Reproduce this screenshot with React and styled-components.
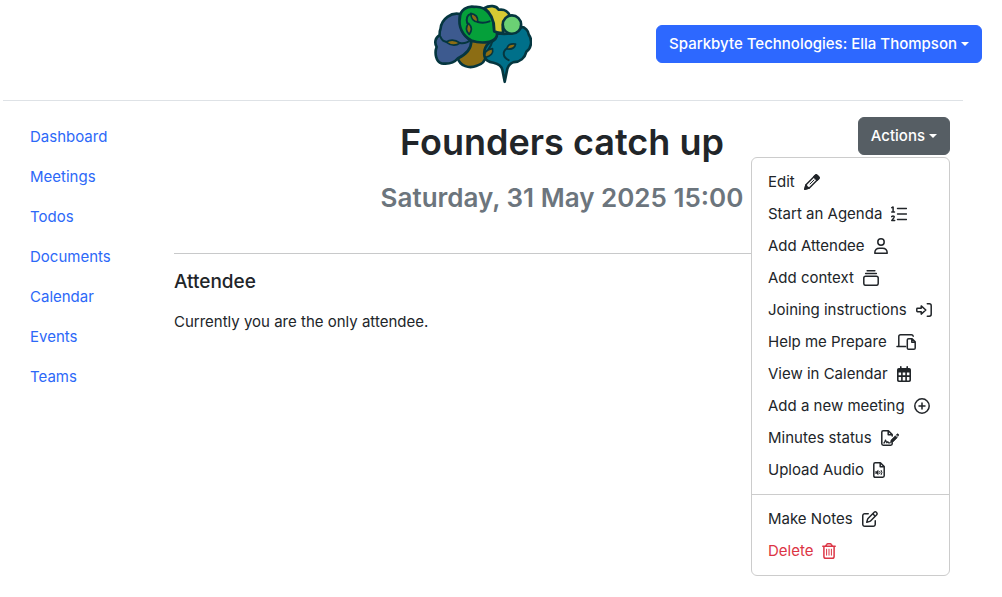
import React from "react";
import styled, { createGlobalStyle } from "styled-components";
import { FaRegPenToSquare } from "react-icons/fa6";

const GlobalStyle = createGlobalStyle`
  *, *::before, *::after { box-sizing: border-box; }
  body {
    margin: 0;
    min-height: 100vh;
    background: #fff;
    color: #212529;
    font: 400 15px/24px Inter, "Liberation Sans", sans-serif;
  }
`;

const Shell = styled.div`
  display: flex;
  flex-direction: column;
  min-height: 100vh;
`;

const Header = styled.header`
  display: grid;
  grid-template-columns: 1fr auto 1fr;
  align-items: start;
  min-height: 101px;
  margin: 0 39px 0 3px;
  border-bottom: 1px solid #dee2e6;
`;

const HomeLink = styled.a`
  grid-column: 2;
  padding-top: 4px;
  line-height: 0;
`;

const Button = styled.button`
  display: inline-flex;
  align-items: center;
  gap: 4px;
  padding: 6px 12px;
  border: 1px solid ${(p) => p.$color};
  border-radius: 6px;
  background: ${(p) => p.$color};
  color: #fff;
  font: inherit;
  font-weight: 500;
  white-space: nowrap;
  cursor: pointer;

  &::after {
    content: "";
    border-top: 4px solid;
    border-left: 4px solid transparent;
    border-right: 4px solid transparent;
  }
`;

const AccountSlot = styled.div`
  justify-self: end;
  margin: 25px -19px 0 0;
`;

const Page = styled.div`
  display: grid;
  flex: 1;
  grid-template-columns: 160px minmax(0, 1fr);
  padding: 16px 52px 16px 14px;
`;

const Nav = styled.nav`
  display: flex;
  flex-direction: column;
`;

const NavLink = styled.a`
  padding: 8px 16px;
  color: #2c68f8;
  text-decoration: none;
`;

const TitleRow = styled.div`
  display: grid;
  grid-template-columns: 1fr auto 1fr;
  align-items: start;
  min-height: 136px;
`;

const Titles = styled.div`
  grid-column: 2;
  text-align: center;
`;

const Title = styled.h1`
  margin: 0 0 16px;
  font-size: 36px;
  font-weight: 600;
  line-height: 50px;
`;

const Subtitle = styled.h2`
  margin: 0;
  color: #6c757d;
  font-size: 26px;
  font-weight: 600;
  line-height: 30px;
`;

const Dropdown = styled.div`
  position: relative;
  justify-self: end;
`;

const Menu = styled.div`
  position: absolute;
  top: 40px;
  right: 0;
  z-index: 1;
  display: flex;
  flex-direction: column;
  width: 199px;
  padding: 8px 0;
  border: 1px solid #ccc;
  border-radius: 6px;
  background: #fff;
`;

const MenuItem = styled.a`
  display: flex;
  align-items: center;
  gap: 9px;
  padding: 4px 16px;
  color: ${(p) => (p.$danger ? "#dc3545" : "#212529")};
  text-decoration: none;
  white-space: nowrap;
`;

const MenuDivider = styled.hr`
  width: 100%;
  margin: 8px 0;
  border: 0;
  border-top: 1px solid #ccc;
`;

const Rule = styled.hr`
  margin: 0 0 16px;
  border: 0;
  border-top: 1px solid #c8c9ca;
`;

const SectionTitle = styled.h3`
  margin: 0 0 16px;
  font-size: 19px;
  font-weight: 500;
  line-height: 24px;
`;

const Text = styled.p`
  margin: 0;
`;

const Glyph = styled.svg.attrs({ height: 16, fill: "none", stroke: "currentColor", strokeWidth: 1.5, strokeLinecap: "round", strokeLinejoin: "round", "aria-hidden": true })`
  flex: none;
`;

const Icon = ({ w = 16, children }) => (
  <Glyph width={w} viewBox={`0 0 ${w} 16`}>{children}</Glyph>
);

const icons = {
  pencil: (
    <Icon>
      <path d="M.8 15.2 2 10.7 11.2 1.5q1-1 2 0l1.3 1.3q1 1 0 2L5.3 14Z" />
      <path d="m9.8 2.9 3.3 3.3 1.6-1.6q.8-.8 0-1.6L13 1.3q-.8-.8-1.6 0ZM1 15l1-4 1.2 1.8L5 14Z" fill="currentColor" />
      <path d="m6 10 4-4" strokeWidth="1" />
    </Icon>
  ),
  list: (
    <Icon>
      <path d="M6.5 2.500h9M6.500 8h9M6.500 13.500h9" strokeWidth="1.4" />
      <path d="M.8 1.600 2.100 1v5M.7 6h2.800M.7 10.600q1.200-1.100 2.300-.3c.9 1.100-.6 2.200-2.200 4.100h2.900" strokeWidth="1.500" />
    </Icon>
  ),
  person: (
    <Icon w={14}>
      <circle cx="7" cy="4" r="3.2" />
      <path d="M.8 15.2c0-3.2 2-4.9 4.8-4.9h2.8c2.8 0 4.8 1.700 4.8 4.900Z" />
    </Icon>
  ),
  albums: (
    <Icon>
      <rect x=".8" y="6.300" width="14.400" height="9" rx="1.800" />
      <path d="M2.600 3.500h10.800M4.100.8h7.800" strokeWidth="1.400" />
    </Icon>
  ),
  join: (
    <Icon>
      <path d="M11.300 1.800h2q1.900 0 1.900 1.900v8.600q0 1.900-1.900 1.900h-2" />
      <path d="M1.400 6.300h3.800V3.900L9.800 8l-4.600 4.100V9.700H1.400Q.8 9.700.8 9V7q0-.7.6-.7Z" />
    </Icon>
  ),
  devices: (
    <Icon w={20}>
      <path d="M2.800 11.500V2.600Q2.800.8 4.600.8h10.800q1.500 0 1.800 1.400M9.600 12.500H1" />
      <path d="M12.600 4.800h3.500l3.100 3.100v6q0 1.300-1.300 1.300h-5.300q-1.300 0-1.300-1.300V6.100q0-1.300 1.300-1.300ZM15.800 5v3.200H19" />
    </Icon>
  ),
  calendar: (
    <Icon w={14}>
      <path fill="currentColor" stroke="none" fillRule="evenodd" d="M3 .8a.8.8 0 0 1 1.600 0V2h4.800V.8a.8.8 0 0 1 1.600 0V2h1.200Q14 2 14 3.800v10.400q0 1.800-1.800 1.800H1.800Q0 16 0 14.200V3.800Q0 2 1.800 2H3ZM1.600 6.600v2.600h2.500V6.600ZM5.700 6.600v2.600h2.600V6.600ZM9.900 6.600v2.600h2.500V6.600ZM1.600 11v2.800q0 .6.600.6h1.900V11ZM5.700 11v3.400h2.600V11ZM9.900 11v3.400h1.900q.6 0 .6-.6V11Z" />
    </Icon>
  ),
  plus: (
    <Icon>
      <circle cx="8" cy="8" r="7.200" />
      <path d="M8 5v6M5 8h6" />
    </Icon>
  ),
  signature: (
    <Icon w={18}>
      <path d="M11.200 12.800v1q0 1.400-1.400 1.400H2.200Q.8 15.200.8 13.800V2.200Q.8.8 2.200.8H7.400l3.800 3.800v1.300M7.200 1v3.800H11" />
      <path d="M2.800 12.900h.5L4.500 10l1.300 2.800 1-1.100.8 1.100h1.300" strokeWidth="1.200" />
      <path d="m9.500 12.500.5-2.500 4.300-4.300 2 2L12 12ZM15.400 4.700l.7-.7q.6-.5 1.100 0l.5.5q.5.600 0 1.100l-.6.600Z" fill="currentColor" strokeWidth=".6" />
    </Icon>
  ),
  audio: (
    <Icon w={12}>
      <path d="M2.200.8h5.200l3.800 3.800v9.200q0 1.400-1.400 1.400H2.200Q.8 15.200.8 13.800V2.200Q.8.8 2.200.8ZM7.200 1v3.800H11" />
      <path d="M2.700 9.500h1l1.500-1.300v4.600l-1.500-1.300h-1Z" fill="currentColor" strokeWidth=".5" />
      <path d="M6.800 9.400q.8 1.100 0 2.200M8.300 8.400q1.500 2.100 0 4.200" strokeWidth="1" />
    </Icon>
  ),
  trash: (
    <Icon w={14}>
      <path d="M.8 3.200h12.400M3.700 3 4.800 1.300Q5.100.8 5.800.8h2.400q.7 0 1 .5L10.300 3M1.900 3.400v10q0 1.800 1.800 1.800h6.600q1.800 0 1.800-1.800v-10" />
      <path d="M4.600 6.200v6M7 6.200v6M9.400 6.200v6" strokeWidth="1" />
    </Icon>
  ),
  notes: <FaRegPenToSquare size={16} aria-hidden />,
};

const actions = [
  ["Edit", "pencil"],
  ["Start an Agenda", "list"],
  ["Add Attendee", "person"],
  ["Add context", "albums"],
  ["Joining instructions", "join"],
  ["Help me Prepare", "devices"],
  ["View in Calendar", "calendar"],
  ["Add a new meeting", "plus"],
  ["Minutes status", "signature"],
  ["Upload Audio", "audio"],
];

const sections = ["Dashboard", "Meetings", "Todos", "Documents", "Calendar", "Events", "Teams"];

const BrainLogo = () => (
  <svg width="98" height="80" viewBox="25 11 298 240" stroke="#05363f" strokeWidth="8" strokeLinejoin="round" strokeLinecap="round" aria-hidden="true">
    <path fill="#8c6d14" d="M138 122C132 148 112 164 97 174 104 198 132 207 155 197 170 193 180 184 182 170L196 125Z" />
    <path fill="#3d5a8f" d="M104 40C78 34 48 54 45 84 42 90 42 98 42 104 28 112 26 128 33 140 26 158 31 186 48 190 70 193 88 186 97 175 124 162 140 146 138 120 112 104 100 78 104 40Z" />
    <path fill="#05a03a" d="M104 50C104 28 126 14 148 18 186 15 210 50 208 92 222 96 221 101 217 108 204 130 164 130 138 120 111 106 98 76 104 50Z" />
    <path fill="#d6ca33" d="M178 22C194 12 215 14 222 27 240 24 252 33 256 47 238 56 230 74 236 96 225 98 215 97 208 92 209 62 200 38 178 22Z" />
    <path fill="#00708a" d="M217 99C250 102 282 100 290 79 302 80 312 90 313 102 326 120 320 145 306 154 301 174 286 186 268 186 260 188 252 196 248 206L240 246 233 210C230 196 216 190 206 188 194 186 182 180 179 170 174 150 184 132 195 126 210 121 217 112 217 99Z" />
    <circle fill="#6bd074" cx="262" cy="72" r="28" />
    <path fill="none" strokeWidth="6" d="M137 40C126 42 122 54 126 68M158 64C172 68 184 66 194 62M44 108C48 118 54 124 62 124M104 128C116 130 128 126 136 118M202 124C200 132 196 140 190 148M247 144C232 154 234 172 252 180" />
    <g fill="#8c6d14" strokeWidth="5">
      <path d="M62 125Q82 112 104 128 84 142 62 125Z" />
      <path d="M137 38Q160 42 158 64 138 62 137 38Z" />
      <path d="M130 68Q146 84 132 102 116 86 130 68Z" />
      <path d="M180 172Q174 150 203 145 208 166 180 172Z" />
      <path d="M247 146Q248 128 273 131 270 149 247 146Z" />
    </g>
  </svg>
);

export default function App() {
  return (
    <Shell>
      <GlobalStyle />
      <Header>
        <HomeLink href="#" aria-label="Home"><BrainLogo /></HomeLink>
        <AccountSlot>
          <Button type="button" $color="#2d68ff">Sparkbyte Technologies: Ella Thompson</Button>
        </AccountSlot>
      </Header>
      <Page>
        <Nav>
          {sections.map((s) => <NavLink key={s} href="#">{s}</NavLink>)}
        </Nav>
        <main>
          <TitleRow>
            <Titles>
              <Title>Founders catch up</Title>
              <Subtitle>Saturday, 31 May 2025 15:00</Subtitle>
            </Titles>
            <Dropdown>
              <Button type="button" aria-expanded="true" $color="#565e64">Actions</Button>
              <Menu>
                {actions.map(([label, icon]) => (
                  <MenuItem key={label} href="#">{label}{icons[icon]}</MenuItem>
                ))}
                <MenuDivider />
                <MenuItem href="#">Make Notes{icons.notes}</MenuItem>
                <MenuItem href="#" $danger>Delete{icons.trash}</MenuItem>
              </Menu>
            </Dropdown>
          </TitleRow>
          <Rule />
          <SectionTitle>Attendee</SectionTitle>
          <Text>Currently you are the only attendee.</Text>
        </main>
      </Page>
    </Shell>
  );
}
